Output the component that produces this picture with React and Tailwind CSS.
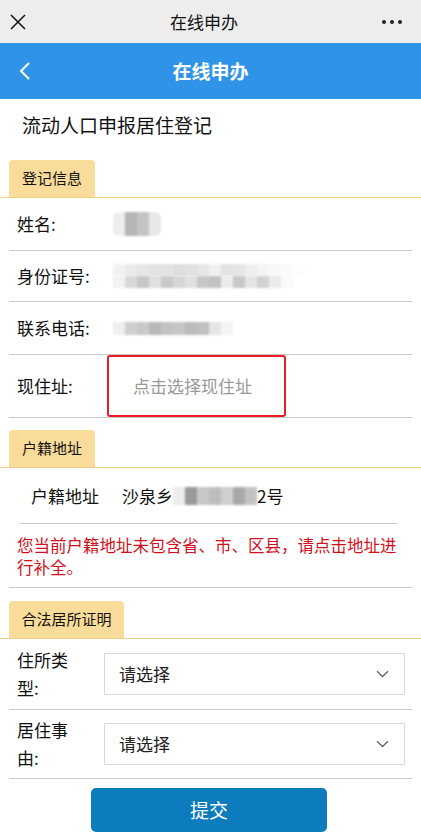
import React from 'react';

const font = { fontFamily: '"Noto Sans CJK SC", "Noto Sans", sans-serif' };

const Blur = ({ cells, className = '' }) => (
  <div className={`flex blur-[1px] ${className}`}>
    {cells.map((c, i) => (
      <div key={i} className="w-[12px] h-full" style={{ background: c }} />
    ))}
  </div>
);

const Tab = ({ children, w }) => (
  <div className="border-b border-[#efcf86]">
    <div className={`ml-[9px] h-[37px] ${w} rounded-t-[4px] bg-[#fadc9a] flex items-center justify-center text-[15px] text-[#111]`}>
      {children}
    </div>
  </div>
);

const Divider = ({ cls = 'mx-[9px]' }) => <div className={`${cls} h-px bg-[#c9c9c9]`} />;

const Chevron = () => (
  <svg width="13" height="8" viewBox="0 0 13 8" fill="none" stroke="#666" strokeWidth="1.4">
    <path d="M1 1.2 6.5 6.5 12 1.2" />
  </svg>
);

const SelectRow = ({ label, h }) => (
  <div className={`flex items-center ${h}`}>
    <div className="w-[104px] pl-[17px] pr-[26px] text-[17px] leading-[28px] text-[#111]">{label}</div>
    <div className="w-[301px] h-[42px] border border-[#d9d9d9] flex items-center justify-between pl-[14px] pr-[15px]">
      <span className="text-[17px] text-[#222]">请选择</span>
      <Chevron />
    </div>
  </div>
);

export default function App() {
  return (
    <div className="w-[421px] min-h-[832px] bg-white" style={font}>
      {/* wechat top bar */}
      <div className="h-[43px] bg-[#ededed] flex items-center justify-between px-[10px]">
        <svg width="16" height="16" viewBox="0 0 16 16" stroke="#111" strokeWidth="1.5">
          <path d="M1 1 15 15M15 1 1 15" />
        </svg>
        <span className="text-[17px] text-[#111]">在线申办</span>
        <div className="flex gap-[4px] mr-[9px]">
          <span className="w-[4px] h-[4px] rounded-full bg-[#222]" />
          <span className="w-[4px] h-[4px] rounded-full bg-[#222]" />
          <span className="w-[4px] h-[4px] rounded-full bg-[#222]" />
        </div>
      </div>

      {/* blue header */}
      <div className="h-[56px] bg-[#2f94e7] flex items-center relative">
        <svg className="absolute left-[19px]" width="12" height="18" viewBox="0 0 12 18" fill="none" stroke="#fff" strokeWidth="2">
          <path d="M10 1 2 9l8 8" />
        </svg>
        <span className="mx-auto text-[19px] font-bold text-white">在线申办</span>
      </div>

      <div className="h-[61px] pt-[14px] pl-[22px] text-[19px] leading-[24px] text-[#111]">流动人口申报居住登记</div>

      <Tab w="w-[86px]">登记信息</Tab>

      <div className="h-[52px] flex items-center pl-[17px] text-[17px] text-[#111]">
        <span className="w-[96px]">姓名:</span>
        <Blur className="h-[24px] rounded-[6px] overflow-hidden" cells={['#ededed', '#b5b5b5', '#c4c4c4', '#e8e8e8']} />
      </div>
      <Divider />
      <div className="h-[50px] flex items-center pl-[17px] text-[17px] text-[#111]">
        <span className="w-[96px]">身份证号:</span>
        <div className="flex flex-col">
          <Blur className="h-[12px]" cells={['#f1f1f1', '#eaeaea', '#e6e6e6', '#e2e2e2', '#e3e3e3', '#dedede', '#e0e0e0', '#e6e6e6', '#f0f0f0', '#e2e2e2', '#e6e6e6', '#eeeeee', '#f5f5f5', '#f8f8f8', '#fbfbfb', '#fdfdfd']} />
          <Blur className="h-[12px]" cells={['#f2f2f2', '#d8d8d8', '#c6c6c6', '#e0e0e0', '#c9c9c9', '#d6d6d6', '#e0e0e0', '#c6c6c6', '#c2c2c2', '#ececec', '#c8c8c8', '#e4e4e4', '#d2d2d2', '#ebebeb', '#fafafa']} />
        </div>
      </div>
      <Divider />
      <div className="h-[52px] flex items-center pl-[17px] text-[17px] text-[#111]">
        <span className="w-[96px]">联系电话:</span>
        <Blur className="h-[13px]" cells={['#efefef', '#cfcfcf', '#c9c9c9', '#b8b8b8', '#c2c2c2', '#c6c6c6', '#bbbbbb', '#c0c0c0', '#e5e5e5', '#f4f4f4']} />
      </div>
      <Divider />
      <div className="h-[62px] flex items-center pl-[17px] text-[17px] text-[#111]">
        <span className="w-[90px]">现住址:</span>
        <div className="w-[179px] h-[62px] border-2 border-[#ec1c24] rounded-[3px] flex items-center pl-[24px] text-[#999]">
          点击选择现住址
        </div>
      </div>
      <Divider />

      <div className="mt-[12px]">
        <Tab w="w-[86px]">户籍地址</Tab>
      </div>
      <div className="h-[55px] flex items-center text-[17px] text-[#111]">
        <span className="w-[122px] pl-[31px]">户籍地址</span>
        <span>沙泉乡</span>
        <Blur className="h-[18px]" cells={['#ededed', '#9a9a9a', '#c8c8c8', '#bdbdbd', '#cfcfcf', '#a9a9a9', '#c2c2c2']} />
        <span>2号</span>
      </div>
      <Divider cls="mx-[20px] w-[377px]" />
      <p className="pl-[17px] pr-[16px] pt-[10px] pb-[9px] text-[16.5px] leading-[22px] text-[#d2101c]">
        您当前户籍地址未包含省、市、区县，请点击地址进行补全。
      </p>
      <Divider />

      <div className="mt-[13px]">
        <Tab w="w-[115px]">合法居所证明</Tab>
      </div>
      <SelectRow label="住所类型:" h="h-[70px]" />
      <Divider />
      <SelectRow label="居住事由:" h="h-[68px]" />
      <Divider />

      <div className="pt-[9px] pl-[91px]">
        <button className="w-[236px] h-[44px] rounded-[5px] bg-[#0c7cbc] text-white text-[19px]">提交</button>
      </div>
    </div>
  );
}
